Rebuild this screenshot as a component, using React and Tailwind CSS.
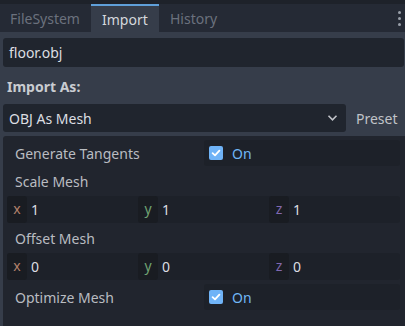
import React from "react";

const font = { fontFamily: '"Noto Sans", "Open Sans", sans-serif' };

function Check() {
  return (
    <div className="flex h-[26px] items-center rounded-[3px] bg-[#1d2129] pl-[5px]">
      <div className="flex h-[14px] w-[14px] items-center justify-center rounded-[2px] bg-[#6fb3f7]">
        <svg width="10" height="10" viewBox="0 0 10 10">
          <path d="M1.6 5.2 L4 7.4 L8.4 2.6" fill="none" stroke="#ffffff" strokeWidth="1.8" strokeLinecap="round" strokeLinejoin="round" />
        </svg>
      </div>
      <span className="ml-[9px] text-[14px] text-[#70b6f5]">On</span>
    </div>
  );
}

function Vec({ vals }) {
  const labels = [
    ["x", "text-[#b3826c]"],
    ["y", "text-[#6fa272]"],
    ["z", "text-[#8068b0]"],
  ];
  return (
    <div className="mr-[5px] ml-[4px] flex h-[27px] rounded-[3px] bg-[#1d2129]">
      {labels.map(([l, c], i) => (
        <div key={l} className="flex flex-1 items-center">
          <div className={`flex h-full w-[20px] items-center justify-center rounded-[3px] bg-[#191c22] pb-[2px] text-[14px] ${c}`}>{l}</div>
          <span className="ml-[4px] text-[14px] text-[#dcdee2]">{vals[i]}</span>
        </div>
      ))}
    </div>
  );
}

export default function App() {
  return (
    <div className="h-[326px] w-[405px] overflow-hidden bg-[#363d4a]" style={font}>
      <div className="h-[4px] bg-[#1e222a]" />
      <div className="flex h-[28px] items-stretch bg-[#252a35]">
        <div className="flex w-[91px] items-center pl-[10px] text-[14px] text-[#6b717d]">FileSystem</div>
        <div className="flex w-[68px] items-center border-t-2 border-[#5f9fd9] bg-[#363d4a] pl-[11px] text-[14px] text-[#d5d8dd]">Import</div>
        <div className="flex items-center pl-[11px] text-[14px] text-[#6b717d]">History</div>
        <div className="ml-auto flex w-[10px] flex-col items-center justify-center gap-[3px] pr-[2px]">
          <div className="h-[3px] w-[3px] rounded-full bg-[#9aa0aa]" />
          <div className="h-[3px] w-[3px] rounded-full bg-[#9aa0aa]" />
          <div className="h-[3px] w-[3px] rounded-full bg-[#9aa0aa]" />
        </div>
      </div>
      <div className="mt-[6px] ml-[3px] mr-[1px] flex h-[29px] items-center rounded-[3px] bg-[#20252e] pl-[6px] text-[14px] text-[#dcdee2]">
        floor.obj
      </div>
      <div className="mt-[7px] h-[25px] pl-[7px] text-[14px] font-bold leading-[25px] text-[#c9ccd1]">Import As:</div>
      <div className="mt-[5px] flex h-[28px] items-center">
        <div className="ml-[3px] flex h-full w-[343px] items-center justify-between rounded-[3px] bg-[#20252e] pl-[6px] pr-[8px] text-[14px] text-[#dcdee2]">
          <span>OBJ As Mesh</span>
          <svg width="11" height="8" viewBox="0 0 11 8">
            <path d="M1.5 1.8 L5.5 5.8 L9.5 1.8" fill="none" stroke="#c0c3c8" strokeWidth="1.6" />
          </svg>
        </div>
        <span className="ml-[10px] text-[14px] text-[#c0c3c8]">Preset</span>
      </div>
      <div className="mt-[4px] ml-[3px] h-[200px] rounded-tl-[3px] bg-[#21252e] pt-[4px]">
        <div className="flex h-[26px] items-center">
          <span className="w-[201px] pl-[12px] text-[14px] text-[#b9bcc1]">Generate Tangents</span>
          <div className="mr-[5px] flex-1"><Check /></div>
        </div>
        <div className="flex h-[30px] items-center pl-[12px] text-[14px] text-[#b9bcc1]">Scale Mesh</div>
        <Vec vals={["1", "1", "1"]} />
        <div className="flex h-[30px] items-center pl-[12px] text-[14px] text-[#b9bcc1]">Offset Mesh</div>
        <Vec vals={["0", "0", "0"]} />
        <div className="mt-[4px] flex h-[26px] items-center">
          <span className="w-[201px] pl-[12px] text-[14px] text-[#b9bcc1]">Optimize Mesh</span>
          <div className="mr-[5px] flex-1"><Check /></div>
        </div>
      </div>
    </div>
  );
}
